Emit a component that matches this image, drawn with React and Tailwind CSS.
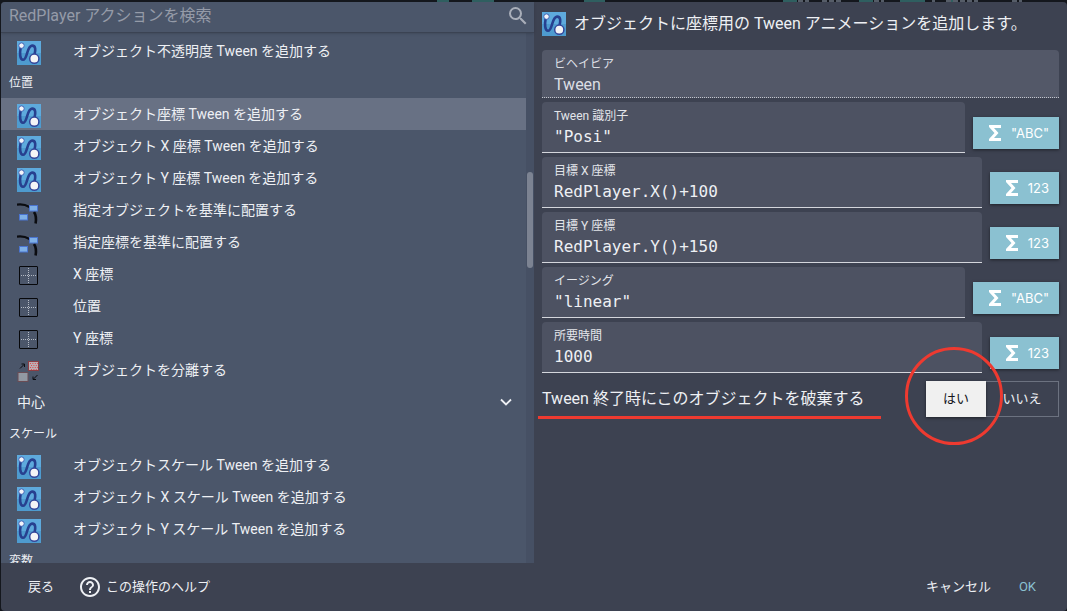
import React from "react";

function TweenIcon() {
  return (
    <svg viewBox="0 0 24 24" className="size-6 shrink-0" aria-hidden="true">
      <rect width="24" height="24" fill="#5eaadd" />
      <rect y="12" width="24" height="12" fill="#4e9bcf" />
      <path
        d="M3.6 7C2.600 12 2.800 18.600 6 18.800C10.500 19 9.600 5 15 4.600C19.200 4.400 18.400 10 17.600 13"
        fill="none"
        stroke="#27408f"
        strokeWidth="2.600"
        strokeLinecap="round"
      />
      <circle cx="4.500" cy="4.600" r="2.700" fill="#f4f5fa" stroke="#3c5cb0" strokeWidth="0.900" />
      <circle cx="17.300" cy="17.700" r="4.600" fill="#f4f4f6" stroke="#34479b" strokeWidth="1.500" />
    </svg>
  );
}

function AroundIcon() {
  return (
    <svg viewBox="0 0 24 24" className="size-6 shrink-0" aria-hidden="true">
      <path d="M0 4.700C4.500 4 9 5 12.500 7" fill="none" stroke="#0b0c10" strokeWidth="2.200" />
      <path d="M17 12C19 15 19.400 19 18.600 23.500" fill="none" stroke="#0b0c10" strokeWidth="2.600" />
      <rect x="12.500" y="5.500" width="8" height="5.500" fill="#7fb0e6" stroke="#4a74d0" />
      <rect x="2.500" y="14.500" width="8" height="5.500" fill="#7fb0e6" stroke="#4a74d0" />
    </svg>
  );
}

function PositionIcon() {
  return (
    <svg viewBox="0 0 24 24" className="size-6 shrink-0" aria-hidden="true">
      <rect x="2.500" y="2.500" width="18" height="18" rx="0.500" fill="none" stroke="#07080b" />
      <path d="M4 11.500H20M11.500 4V20" fill="none" stroke="#b4bac4" strokeDasharray="1 1" />
    </svg>
  );
}

function SeparateIcon() {
  return (
    <svg viewBox="0 0 24 24" className="size-6 shrink-0" aria-hidden="true">
      <rect x="11.500" y="1.500" width="10" height="9" fill="#b9aeb4" stroke="#8c3c42" />
      <path
        d="M13 3.500H21M14 5.500H21M13 7.500H21M14 9.500H21"
        fill="none"
        stroke="#e0484a"
        strokeDasharray="1 1.400"
      />
      <rect x="1" y="12.500" width="10" height="9" fill="#9298a2" stroke="#6b4c54" />
      <path d="M3 8.500L7 4.500M4.500 4H7.500V7" fill="none" stroke="#0b0c10" />
      <path d="M20.500 15L16.500 19M16 16.500V19.500H19" fill="none" stroke="#0b0c10" />
    </svg>
  );
}

const ICONS = {
  tween: TweenIcon,
  around: AroundIcon,
  position: PositionIcon,
  separate: SeparateIcon,
};

const ACTIONS = [
  { icon: "tween", text: "オブジェクト不透明度 Tween を追加する" },
  { heading: "位置" },
  { icon: "tween", text: "オブジェクト座標 Tween を追加する", selected: true },
  { icon: "tween", text: "オブジェクト X 座標 Tween を追加する" },
  { icon: "tween", text: "オブジェクト Y 座標 Tween を追加する" },
  { icon: "around", text: "指定オブジェクトを基準に配置する" },
  { icon: "around", text: "指定座標を基準に配置する" },
  { icon: "position", text: "X 座標" },
  { icon: "position", text: "位置" },
  { icon: "position", text: "Y 座標" },
  { icon: "separate", text: "オブジェクトを分離する" },
  { group: "中心" },
  { heading: "スケール" },
  { icon: "tween", text: "オブジェクトスケール Tween を追加する" },
  { icon: "tween", text: "オブジェクト X スケール Tween を追加する" },
  { icon: "tween", text: "オブジェクト Y スケール Tween を追加する" },
  { heading: "変数" },
];

function ActionRow({ item }) {
  if (item.heading) {
    return (
      <li className="flex h-[31px] items-center pl-2 text-xs leading-4">{item.heading}</li>
    );
  }
  if (item.group) {
    return (
      <li>
        <button type="button" className="flex h-8 w-full items-center justify-between pl-4 pr-3 text-sm leading-5">
          {item.group}
          <svg viewBox="0 0 16 16" className="size-4" aria-hidden="true">
            <path d="M3 5.500L8 10.500L13 5.500" fill="none" stroke="#eef0f4" strokeWidth="1.800" />
          </svg>
        </button>
      </li>
    );
  }
  const Icon = ICONS[item.icon];
  return (
    <li>
      <button
        type="button"
        className={
          item.selected
            ? "flex h-8 w-full items-start gap-8 bg-[#687184] pl-4 pt-1.5 text-left text-sm leading-5"
            : "flex h-8 w-full items-start gap-8 pl-4 pt-1.5 text-left text-sm leading-5"
        }
      >
        <Icon />
        {item.text}
      </button>
    </li>
  );
}

function SearchPanel() {
  return (
    <section className="flex min-h-0 flex-col bg-[#4b566a]">
      <div className="z-10 flex h-[31px] shrink-0 items-start justify-between border-b border-[#3b4353] pl-2 pr-1 shadow-sm">
        <input
          type="search"
          aria-label="RedPlayer アクションを検索"
          placeholder="RedPlayer アクションを検索"
          className="h-[26px] min-w-0 flex-1 bg-transparent text-base leading-6 outline-none placeholder:text-[#959ba8]"
        />
        <svg viewBox="0 0 24 24" className="mt-0.5 size-6 shrink-0" fill="#a9aeb9" aria-hidden="true">
          <path d="M15.5 14h-.79l-.28-.27A6.47 6.47 0 0 0 16 9.5 6.5 6.5 0 1 0 9.5 16c1.61 0 3.09-.59 4.23-1.57l.27.28v.79l5 4.99L20.490 19l-4.990-5zm-6 0C7.010 14 5 11.990 5 9.500S7.010 5 9.500 5 14 7.010 14 9.500 11.990 14 9.500 14z" />
        </svg>
      </div>
      <div className="flex min-h-0 flex-1">
        <ul className="min-w-0 flex-1 overflow-hidden pt-0.5">
          {ACTIONS.map((item, index) => (
            <ActionRow key={index} item={item} />
          ))}
        </ul>
        <div className="w-2 shrink-0 bg-[#465064] pt-[139px]">
          <div className="mx-px h-24 rounded-full bg-[#7c8392]" />
        </div>
      </div>
    </section>
  );
}

const FIELDS = [
  { id: "identifier", label: "Tween 識別子", value: '"Posi"', kind: '"ABC"' },
  { id: "target-x", label: "目標 X 座標", value: "RedPlayer.X()+100", kind: "123" },
  { id: "target-y", label: "目標 Y 座標", value: "RedPlayer.Y()+150", kind: "123" },
  { id: "easing", label: "イージング", value: '"linear"', kind: '"ABC"' },
  { id: "duration", label: "所要時間", value: "1000", kind: "123" },
];

function ExpressionField({ field }) {
  return (
    <div className="flex items-end gap-2">
      <div className="flex h-[51px] min-w-0 flex-1 flex-col rounded-t border-b border-[#d4d6dc] bg-[#4d5262] px-3 pt-1">
        <label htmlFor={field.id} className="text-xs leading-5 text-[#e3e5ea]">
          {field.label}
        </label>
        <input
          id={field.id}
          defaultValue={field.value}
          className="h-[21px] w-full bg-transparent font-['DejaVu_Sans_Mono',monospace] text-base leading-5 outline-none"
        />
      </div>
      <button
        type="button"
        className="mb-1 flex h-8 items-center gap-2.5 bg-[#8bc1d1] pl-4 pr-2.5 font-['Inter',sans-serif] text-[13px] leading-5 text-white shadow-[0_1px_3px_rgba(0,0,0,0.5)]"
      >
        <svg viewBox="0 0 12 16" className="h-4 w-3" fill="#ffffff" aria-hidden="true">
          <path d="M0 0H12V3H5L9.500 8L5 13H12V16H0V14L5.500 8L0 2Z" />
        </svg>
        {field.kind}
      </button>
    </div>
  );
}

function ParametersPanel() {
  return (
    <section className="flex min-w-0 flex-col px-2 pt-2.5">
      <h1 className="mb-3.5 flex items-center gap-2 text-base leading-6">
        <TweenIcon />
        オブジェクトに座標用の Tween アニメーションを追加します。
      </h1>
      <div className="flex flex-col gap-1">
        <div className="flex h-12 flex-col rounded-t border-b border-dotted border-[#c3c6ce] bg-[#535868] px-3 pt-1 text-[#dcdee4]">
          <label htmlFor="behavior" className="text-xs leading-5">
            ビヘイビア
          </label>
          <input
            id="behavior"
            readOnly
            value="Tween"
            className="h-[21px] w-full bg-transparent text-base leading-5 outline-none"
          />
        </div>
        {FIELDS.map((field) => (
          <ExpressionField key={field.id} field={field} />
        ))}
      </div>
      <div className="mt-2 flex items-center justify-between">
        <p id="destroy-label" className="relative text-base leading-6">
          Tween 終了時にこのオブジェクトを破棄する
          <span className="absolute -left-1 -right-4 top-[29px] h-[3px] bg-[#ee3a30]" />
        </p>
        <div role="group" aria-labelledby="destroy-label" className="relative flex h-9 text-[13px] leading-5">
          <button type="button" aria-pressed="true" className="w-[60px] bg-[#f0f0f0] text-[#14151c] shadow-[0_1px_3px_rgba(0,0,0,0.5)]">
            はい
          </button>
          <button type="button" aria-pressed="false" className="w-[73px] border border-l-0 border-[#6c7280]">
            いいえ
          </button>
          <span className="pointer-events-none absolute -left-[21px] -top-[34px] size-[98px] rounded-full border-[3px] border-[#ee3a30]" />
        </div>
      </div>
    </section>
  );
}

function BackdropEdge() {
  return (
    <svg viewBox="0 0 1067 2" className="h-0.5 w-full shrink-0" preserveAspectRatio="none" aria-hidden="true">
      <path d="M437 1H449M472 1H494M584 1H605M783 1H797M859 1H873M900 1H925M946 1H956" stroke="#2f5f60" strokeWidth="2" />
      <path d="M798 1H809M822 1H842M874 1H884M932 1H935M946 1H978M1012 1H1022" stroke="#565d68" strokeWidth="2" strokeDasharray="5 2" />
    </svg>
  );
}

export default function App() {
  return (
    <div className="flex h-screen flex-col bg-[#14171d] font-['Roboto','Noto_Sans_CJK_JP',sans-serif] text-[#eef0f4]">
      <BackdropEdge />
      <main className="ml-px flex min-h-0 flex-1 flex-col overflow-hidden rounded bg-[#3d4251]">
        <div className="grid min-h-0 flex-1 grid-cols-2">
          <SearchPanel />
          <ParametersPanel />
        </div>
        <footer className="flex h-12 shrink-0 items-center justify-between pl-[27px] pr-[31px] text-[13px] leading-5">
          <div className="flex items-center gap-6">
            <button type="button">戻る</button>
            <button type="button" className="flex items-center gap-1">
              <svg viewBox="0 0 24 24" className="size-6" fill="#eef0f4" aria-hidden="true">
                <path d="M11 18h2v-2h-2v2zm1-16C6.480 2 2 6.480 2 12s4.480 10 10 10 10-4.480 10-10S17.520 2 12 2zm0 18c-4.410 0-8-3.590-8-8s3.590-8 8-8 8 3.590 8 8-3.590 8-8 8zm0-14c-2.210 0-4 1.790-4 4h2c0-1.100.9-2 2-2s2 .9 2 2c0 2-3 1.750-3 5h2c0-2.250 3-2.500 3-5 0-2.210-1.790-4-4-4z" />
              </svg>
              この操作のヘルプ
            </button>
          </div>
          <div className="flex items-center gap-7">
            <button type="button">キャンセル</button>
            <button type="button" className="text-[#8bc1d1]">OK</button>
          </div>
        </footer>
      </main>
    </div>
  );
}
